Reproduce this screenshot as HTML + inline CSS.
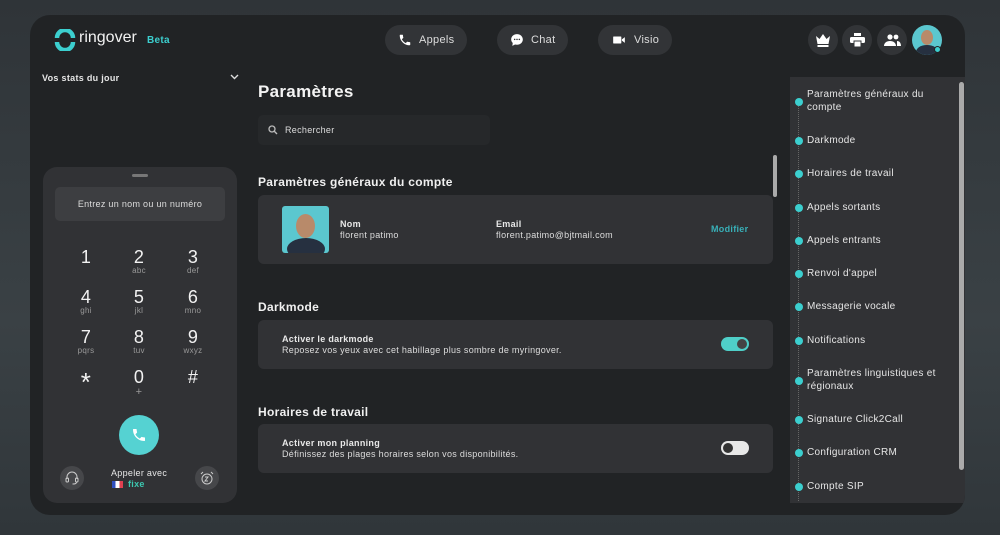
<!DOCTYPE html>
<html><head><meta charset="utf-8"><style>
*{box-sizing:border-box;margin:0;padding:0}
body{width:1000px;height:535px;overflow:hidden;background:linear-gradient(180deg,#2f3438,#3a4145 60%,#30363a);font-family:"Liberation Sans","DejaVu Sans",sans-serif;color:#e8e8e8;position:relative;letter-spacing:0.3px}
.app{position:absolute;left:30px;top:15px;width:935px;height:500px;background:#212325;border-radius:20px;overflow:hidden}
.a{position:absolute}
.pill{position:absolute;top:10px;height:30px;border-radius:15px;background:#323437;font-size:11px;display:flex;align-items:center;gap:7px;padding:0 13px;color:#ddd}
.circ{position:absolute;top:10px;width:30px;height:30px;border-radius:50%;background:#323437;display:flex;align-items:center;justify-content:center}
.card{position:absolute;left:228px;width:515px;background:#313235;border-radius:6px}
.h{position:absolute;left:228px;font-size:12px;font-weight:bold;color:#f0f0f0}
.k{position:absolute;width:40px;text-align:center;font-size:18px;color:#f2f2f2}
.k small{display:block;font-size:8px;color:#999;margin-top:-2px}
.rl{position:absolute;left:777px;font-size:10px;color:#e6e6e6;line-height:13px;width:140px}
.dot{position:absolute;left:765px;width:8px;height:8px;border-radius:50%;background:#3ccfcf}
.tg{position:absolute;width:28px;height:14px;border-radius:7px}
.tg i{position:absolute;top:2px;width:10px;height:10px;border-radius:50%}
</style></head><body>
<div class="app">
 <svg class="a" style="left:24px;top:14px" width="22" height="22" viewBox="0 0 22 22"><path d="M3 9a8 8 0 0 1 16 0" stroke="#3ccfcf" stroke-width="4.5" fill="none"/><path d="M3 13a8 8 0 0 0 16 0" stroke="#3ccfcf" stroke-width="4.5" fill="none"/></svg>
 <div class="a" style="left:49px;top:14px;font-size:16px;color:#f2f2f2;letter-spacing:0">ringover</div>
 <div class="a" style="left:117px;top:20px;font-size:10px;font-weight:bold;color:#3ccfcf">Beta</div>
 <div class="pill" style="left:355px"><svg width="14" height="14" viewBox="0 0 24 24"><path fill="#fff" d="M6.6 10.8c1.4 2.8 3.8 5.1 6.6 6.6l2.2-2.2c.3-.3.7-.4 1-.2 1.1.4 2.300.6 3.6.6.6 0 1 .4 1 1V20c0 .6-.4 1-1 1C10.6 21 3 13.4 3 4c0-.6.4-1 1-1h3.5c.6 0 1 .4 1 1 0 1.3.2 2.5.6 3.6.1.3 0 .7-.2 1z"/></svg>Appels</div>
 <div class="pill" style="left:467px"><svg width="14" height="14" viewBox="0 0 24 24"><path fill="#fff" d="M12 2C6.5 2 2 6 2 11c0 2.4 1 4.5 2.7 6.1L4 22l4.6-2.3c1 .3 2.2.4 3.4.4 5.5 0 10-4 10-9S17.5 2 12 2z"/><circle cx="8" cy="11" r="1.3" fill="#323437"/><circle cx="12" cy="11" r="1.3" fill="#323437"/><circle cx="16" cy="11" r="1.3" fill="#323437"/></svg>Chat</div>
 <div class="pill" style="left:568px"><svg width="16" height="14" viewBox="0 0 24 24"><path fill="#fff" d="M3 6h12a1 1 0 0 1 1 1v10a1 1 0 0 1-1 1H3a1 1 0 0 1-1-1V7a1 1 0 0 1 1-1zm14 5l5-4v10l-5-4z"/></svg>Visio</div>
 <div class="circ" style="left:778px"><svg width="16" height="14" viewBox="0 0 16 14"><path fill="#fff" d="M1 3l3.5 3L8 1l3.5 5L15 3l-1.5 8h-11zM2.5 12h11v2h-11z"/></svg></div>
 <div class="circ" style="left:812px"><svg width="15" height="14" viewBox="0 0 15 14"><rect x="4" y="0" width="7" height="3" fill="#fff"/><rect x="0" y="4" width="15" height="6" rx="1.5" fill="#fff"/><rect x="4" y="8" width="7" height="6" fill="#fff" stroke="#323437"/></svg></div>
 <div class="circ" style="left:847px"><svg width="17" height="12" viewBox="0 0 17 12"><circle cx="6" cy="3" r="2.6" fill="#fff"/><circle cx="12" cy="3" r="2.4" fill="#fff"/><path fill="#fff" d="M0 12c0-3 2.5-5 6-5s6 2 6 5zM13 7c2.5 0 4 2 4 5h-4z"/></svg></div>
 <div class="a" style="left:882px;top:10px;width:30px;height:30px;border-radius:50%;background:#5bc7cf;overflow:hidden"><div class="a" style="left:9px;top:5px;width:12px;height:15px;border-radius:50%;background:#b88a6a"></div><div class="a" style="left:4px;top:20px;width:22px;height:14px;border-radius:50%;background:#263040"></div></div>
 <div class="a" style="left:904px;top:31px;width:7px;height:7px;border-radius:50%;background:#3ccfcf;border:1px solid #212325"></div>

 <div class="a" style="left:12px;top:58px;font-size:9px;font-weight:bold;color:#e6e6e6">Vos stats du jour</div>
 <svg class="a" style="left:200px;top:59px" width="9" height="6"><path d="M1 1l3.5 3.5L8 1" stroke="#ddd" stroke-width="1.4" fill="none"/></svg>

 <div class="a" style="left:13px;top:152px;width:194px;height:336px;background:#313235;border-radius:14px"></div>
 <div class="a" style="left:102px;top:159px;width:16px;height:3px;border-radius:2px;background:#777"></div>
 <div class="a" style="left:25px;top:172px;width:170px;height:34px;background:#3d3e41;border-radius:5px;font-size:9px;color:#ddd;text-align:center;line-height:34px">Entrez un nom ou un numéro</div>
 <div class="k" style="left:36px;top:232px">1<small>&nbsp;</small></div>
 <div class="k" style="left:89px;top:232px">2<small>abc</small></div>
 <div class="k" style="left:143px;top:232px">3<small>def</small></div>
 <div class="k" style="left:36px;top:272px">4<small>ghi</small></div>
 <div class="k" style="left:89px;top:272px">5<small>jkl</small></div>
 <div class="k" style="left:143px;top:272px">6<small>mno</small></div>
 <div class="k" style="left:36px;top:312px">7<small>pqrs</small></div>
 <div class="k" style="left:89px;top:312px">8<small>tuv</small></div>
 <div class="k" style="left:143px;top:312px">9<small>wxyz</small></div>
 <div class="k" style="left:36px;top:352px;font-size:26px">*</div>
 <div class="k" style="left:89px;top:352px">0<small style="font-size:11px">+</small></div>
 <div class="k" style="left:143px;top:352px">#</div>
 <div class="a" style="left:89px;top:400px;width:40px;height:40px;border-radius:50%;background:#55d2d2;display:flex;align-items:center;justify-content:center"><svg width="16" height="16" viewBox="0 0 24 24"><path fill="#fff" d="M6.6 10.8c1.4 2.8 3.8 5.1 6.6 6.6l2.2-2.2c.3-.3.7-.4 1-.2 1.1.4 2.3.6 3.6.6.6 0 1 .4 1 1V20c0 .6-.4 1-1 1C10.6 21 3 13.4 3 4c0-.6.4-1 1-1h3.5c.6 0 1 .4 1 1 0 1.3.2 2.5.6 3.6.1.3 0 .7-.2 1z"/></svg></div>
 <div class="a" style="left:30px;top:451px;width:24px;height:24px;border-radius:50%;background:#46474a"></div>
 <svg class="a" style="left:35px;top:456px" width="14" height="14" viewBox="0 0 14 14"><path d="M2 8V6a5 5 0 0 1 10 0v2" stroke="#ccc" fill="none"/><rect x="1" y="7" width="2.5" height="4" rx="1" fill="none" stroke="#ccc"/><rect x="10.5" y="7" width="2.5" height="4" rx="1" fill="none" stroke="#ccc"/><path d="M11.5 11c0 2-2 2-4 2" stroke="#ccc" fill="none"/></svg>
 <div class="a" style="left:165px;top:451px;width:24px;height:24px;border-radius:50%;background:#46474a"></div>
 <svg class="a" style="left:170px;top:456px" width="14" height="14" viewBox="0 0 14 14"><circle cx="7" cy="8" r="5" stroke="#ccc" fill="none"/><path d="M1 3l2-2M13 3l-2-2M5 6h3l-3 4h3" stroke="#ccc" fill="none"/></svg>
 <div class="a" style="left:81px;top:453px;font-size:9px;color:#e6e6e6">Appeler avec</div>
 <div class="a" style="left:82px;top:466px;width:11px;height:7px;background:linear-gradient(90deg,#3050c0 33%,#fff 33% 66%,#e04050 66%)"></div>
 <div class="a" style="left:98px;top:464px;font-size:9px;font-weight:bold;color:#3cc8b0">fixe</div>

 <div class="a" style="left:228px;top:67px;font-size:17px;font-weight:bold;color:#f4f4f4">Paramètres</div>
 <div class="a" style="left:228px;top:100px;width:232px;height:30px;background:#26282a;border-radius:5px;font-size:9px;color:#ddd;padding-left:27px;line-height:30px">Rechercher</div>
 <svg class="a" style="left:238px;top:110px" width="10" height="10"><circle cx="4" cy="4" r="3" stroke="#bbb" stroke-width="1.3" fill="none"/><path d="M6.3 6.3L9 9" stroke="#bbb" stroke-width="1.4"/></svg>
 <div class="a" style="left:743px;top:140px;width:4px;height:42px;border-radius:2px;background:#aaa"></div>

 <div class="h" style="top:160px">Paramètres généraux du compte</div>
 <div class="card" style="top:180px;height:69px"></div>
 <div class="a" style="left:252px;top:191px;width:47px;height:47px;border-radius:3px;background:#5bc7cf;overflow:hidden"><div class="a" style="left:14px;top:8px;width:19px;height:24px;border-radius:50%;background:#b88a6a"></div><div class="a" style="left:5px;top:32px;width:38px;height:22px;border-radius:50%;background:#263040"></div></div>
 <div class="a" style="left:310px;top:204px;font-size:9px;font-weight:bold">Nom</div>
 <div class="a" style="left:310px;top:215px;font-size:9px;color:#ddd">florent patimo</div>
 <div class="a" style="left:466px;top:204px;font-size:9px;font-weight:bold">Email</div>
 <div class="a" style="left:466px;top:215px;font-size:9px;color:#ddd">florent.patimo@bjtmail.com</div>
 <div class="a" style="left:681px;top:209px;font-size:9px;font-weight:bold;color:#38b0b8">Modifier</div>

 <div class="h" style="top:285px">Darkmode</div>
 <div class="card" style="top:305px;height:49px"></div>
 <div class="a" style="left:252px;top:319px;font-size:9px;font-weight:bold">Activer le darkmode</div>
 <div class="a" style="left:252px;top:330px;font-size:9px;color:#ddd">Reposez vos yeux avec cet habillage plus sombre de myringover.</div>
 <div class="tg" style="left:691px;top:322px;background:#4fcfc8"><i style="left:16px;background:#444"></i></div>

 <div class="h" style="top:390px">Horaires de travail</div>
 <div class="card" style="top:409px;height:49px"></div>
 <div class="a" style="left:252px;top:423px;font-size:9px;font-weight:bold">Activer mon planning</div>
 <div class="a" style="left:252px;top:434px;font-size:9px;color:#ddd">Définissez des plages horaires selon vos disponibilités.</div>
 <div class="tg" style="left:691px;top:426px;background:#e8e8e8"><i style="left:2px;background:#333"></i></div>

 <div class="a" style="left:760px;top:62px;width:175px;height:426px;background:#313235"></div>
 <div class="a" style="left:768px;top:86px;width:0;height:400px;border-left:1px dotted #666"></div>
 <div class="a" style="left:929px;top:67px;width:5px;height:388px;border-radius:3px;background:#aaa"></div>
 <div class="rl" style="top:73px">Paramètres généraux du compte</div><div class="dot" style="top:83px"></div>
 <div class="rl" style="top:119px">Darkmode</div><div class="dot" style="top:122px"></div>
 <div class="rl" style="top:152px">Horaires de travail</div><div class="dot" style="top:155px"></div>
 <div class="rl" style="top:186px">Appels sortants</div><div class="dot" style="top:189px"></div>
 <div class="rl" style="top:219px">Appels entrants</div><div class="dot" style="top:222px"></div>
 <div class="rl" style="top:252px">Renvoi d'appel</div><div class="dot" style="top:255px"></div>
 <div class="rl" style="top:285px">Messagerie vocale</div><div class="dot" style="top:288px"></div>
 <div class="rl" style="top:319px">Notifications</div><div class="dot" style="top:322px"></div>
 <div class="rl" style="top:352px">Paramètres linguistiques et régionaux</div><div class="dot" style="top:362px"></div>
 <div class="rl" style="top:398px">Signature Click2Call</div><div class="dot" style="top:401px"></div>
 <div class="rl" style="top:431px">Configuration CRM</div><div class="dot" style="top:434px"></div>
 <div class="rl" style="top:465px">Compte SIP</div><div class="dot" style="top:468px"></div>
</div>
</body></html>
